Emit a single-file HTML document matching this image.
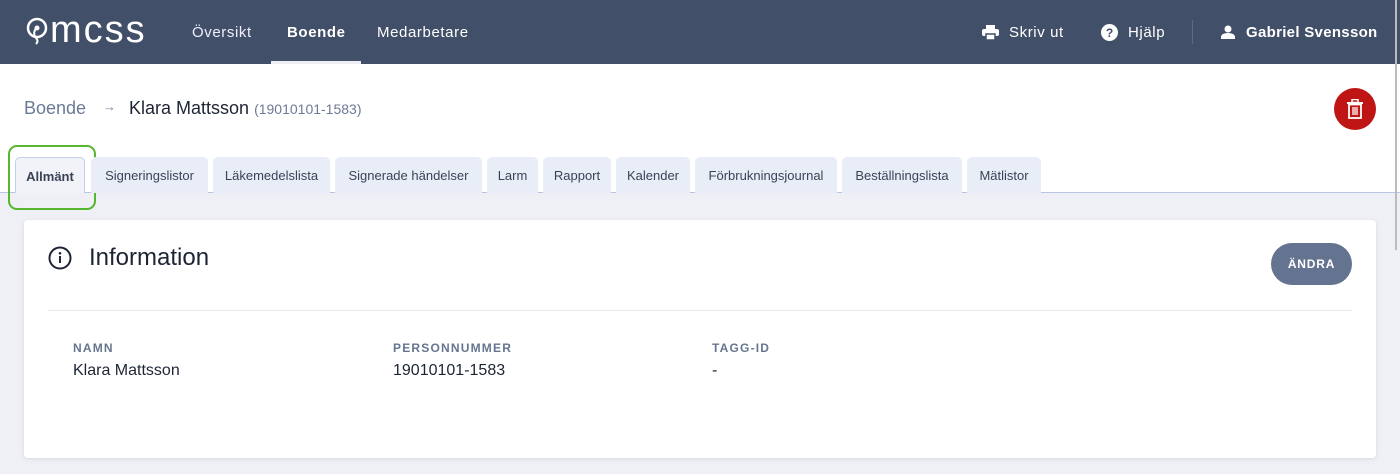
<!DOCTYPE html>
<html><head><meta charset="utf-8"><style>
*{box-sizing:border-box;margin:0;padding:0}
body{width:1400px;height:474px;overflow:hidden;background:#eef0f5;font-family:"Liberation Sans",sans-serif;position:relative}
.hdr{position:absolute;left:0;top:0;width:1400px;height:64px;background:#424f68;box-shadow:0 2px 4px rgba(0,0,0,.2);color:#fff}
.hdr .t{position:absolute;top:24px;font-size:15px;font-weight:bold;letter-spacing:.6px}
.top{position:absolute;left:0;top:64px;width:1400px;height:129px;background:#fff;border-bottom:1px solid #b9c5e2}
.tab{position:absolute;top:157px;height:36px;background:#e9edf7;border-radius:5px 5px 0 0;font-size:13px;color:#3a4356;text-align:center;line-height:37px}
.card{position:absolute;left:24px;top:220px;width:1352px;height:238px;background:#fff;border-radius:4px;box-shadow:0 1px 4px rgba(0,0,0,.1)}
.lbl{position:absolute;top:341px;font-size:12px;font-weight:bold;color:#66758f;letter-spacing:1.2px}
.val{position:absolute;top:362px;font-size:16px;color:#1d2433}
</style></head><body>
<div class="hdr">
<svg style="position:absolute;left:26px;top:17px" width="24" height="30" viewBox="0 0 24 30"><circle cx="11" cy="11" r="9" fill="none" stroke="#fff" stroke-width="2.5"/><path d="M11 11c-3 2-4 6-1 10c2 2 2 4 0 6" fill="none" stroke="#fff" stroke-width="2"/><circle cx="11" cy="11" r="2.5" fill="#fff"/></svg>
<div style="position:absolute;left:50px;top:11px;font-size:38px;line-height:38px;letter-spacing:2px;font-family:'Liberation Sans',sans-serif">mcss</div>
<div class="t" style="left:192px;font-weight:normal;color:#eef">Översikt</div>
<div class="t" style="left:287px">Boende</div>
<div style="position:absolute;left:271px;top:61px;width:90px;height:3px;background:#eef0f5"></div>
<div class="t" style="left:377px;font-weight:normal">Medarbetare</div>
<svg style="position:absolute;left:982px;top:25px" width="17" height="15" viewBox="0 0 17 15"><rect x="4" y="0" width="9" height="4" fill="#fff"/><rect x="0" y="4" width="17" height="7" rx="2" fill="#fff"/><rect x="4" y="9" width="9" height="6" fill="#fff" stroke="#424f68" stroke-width="1.5"/></svg>
<div class="t" style="left:1009px;font-weight:normal">Skriv ut</div>
<svg style="position:absolute;left:1101px;top:24px" width="17" height="17" viewBox="0 0 17 17"><circle cx="8.5" cy="8.5" r="8.5" fill="#fff"/><text x="8.5" y="13" font-size="12" font-weight="bold" text-anchor="middle" fill="#424f68" font-family="Liberation Sans">?</text></svg>
<div class="t" style="left:1128px;font-weight:normal">Hjälp</div>
<div style="position:absolute;left:1192px;top:20px;width:1px;height:24px;background:#5e6a82"></div>
<svg style="position:absolute;left:1221px;top:25px" width="14" height="14" viewBox="0 0 14 14"><circle cx="7" cy="4" r="3.5" fill="#fff"/><path d="M0 14v-2c0-3 4-4 7-4s7 1 7 4v2z" fill="#fff"/></svg>
<div class="t" style="left:1246px;letter-spacing:.3px">Gabriel Svensson</div>
</div>
<div class="top"></div>
<div style="position:absolute;left:1395px;top:0;width:2px;height:250px;background:#bbb"></div>
<div style="position:absolute;left:24px;top:98px;font-size:18px;color:#6c7a93">Boende</div>
<div style="position:absolute;left:103px;top:99px;font-size:13px;color:#7a869c">→</div>
<div style="position:absolute;left:129px;top:98px;font-size:18px;color:#1d2433">Klara Mattsson <span style="font-size:14px;color:#6c7a93">(19010101-1583)</span></div>
<div style="position:absolute;left:1334px;top:88px;width:42px;height:42px;border-radius:50%;background:#c01515"></div>
<svg style="position:absolute;left:1346px;top:99px" width="18" height="20" viewBox="0 0 18 20"><rect x="1" y="3" width="16" height="2" fill="#fff"/><rect x="6" y="0.5" width="6" height="3" fill="none" stroke="#fff" stroke-width="1.5"/><path d="M3 5.5h12v13.5h-12z" fill="none" stroke="#fff" stroke-width="1.8"/><path d="M7 8v8M9 8v8M11 8v8" stroke="#fff" stroke-width="1.3"/></svg>
<div class="tab" style="left:15px;width:70px;background:#f1f3f8;border:1px solid #c4cfe8;border-bottom:none;font-weight:bold">Allmänt</div>
<div style="position:absolute;left:8px;top:145px;width:88px;height:65px;border:2px solid #55b72f;border-radius:9px"></div>
<div class="tab" style="left:91px;width:117px">Signeringslistor</div>
<div class="tab" style="left:213px;width:117px">Läkemedelslista</div>
<div class="tab" style="left:335px;width:147px">Signerade händelser</div>
<div class="tab" style="left:487px;width:51px">Larm</div>
<div class="tab" style="left:543px;width:68px">Rapport</div>
<div class="tab" style="left:616px;width:74px">Kalender</div>
<div class="tab" style="left:695px;width:142px">Förbrukningsjournal</div>
<div class="tab" style="left:842px;width:120px">Beställningslista</div>
<div class="tab" style="left:967px;width:74px">Mätlistor</div>
<div class="card"></div>
<svg style="position:absolute;left:48px;top:246px" width="24" height="24" viewBox="0 0 24 24"><circle cx="12" cy="12" r="10.5" fill="none" stroke="#1d2433" stroke-width="2"/><rect x="11" y="10" width="2" height="7" fill="#1d2433"/><circle cx="12" cy="7.3" r="1.3" fill="#1d2433"/></svg>
<div style="position:absolute;left:89px;top:244px;font-size:24px;color:#1d2433">Information</div>
<div style="position:absolute;left:1271px;top:243px;width:81px;height:42px;border-radius:21px;background:#64738f;color:#fff;font-size:12px;font-weight:bold;letter-spacing:.8px;text-align:center;line-height:42px">ÄNDRA</div>
<div style="position:absolute;left:48px;top:310px;width:1304px;height:1px;background:#e6e9f0"></div>
<div class="lbl" style="left:73px">NAMN</div>
<div class="val" style="left:73px">Klara Mattsson</div>
<div class="lbl" style="left:393px">PERSONNUMMER</div>
<div class="val" style="left:393px">19010101-1583</div>
<div class="lbl" style="left:712px">TAGG-ID</div>
<div class="val" style="left:712px">-</div>
</body></html>
